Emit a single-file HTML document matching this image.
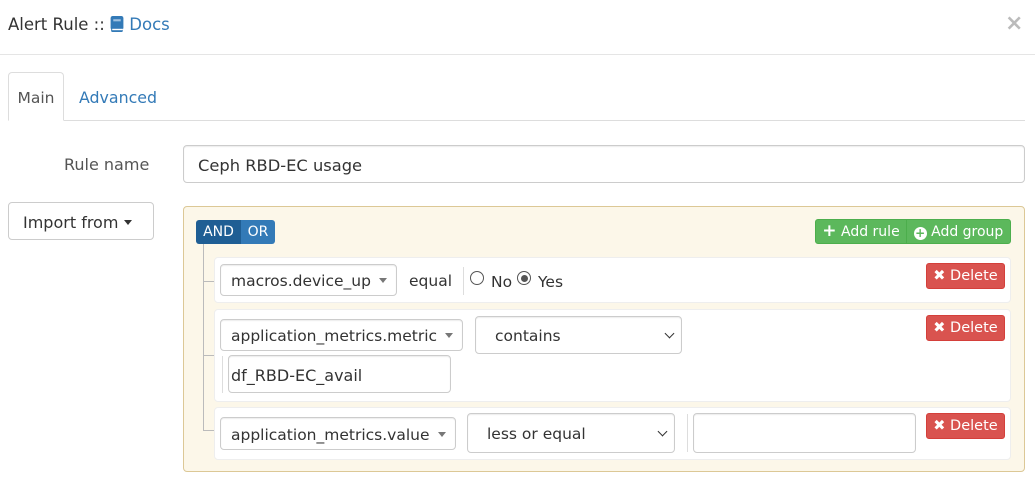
<!DOCTYPE html>
<html><head><style>
*{box-sizing:border-box;margin:0;padding:0}
body{width:1035px;height:489px;background:#fff;font-family:"DejaVu Sans","Liberation Sans",sans-serif;font-size:15.5px;color:#333;position:relative;overflow:hidden}
.a{position:absolute}
.sel{position:absolute;background:#fff;border:1px solid #ccc;border-radius:4px;box-shadow:inset 0 1px 1px rgba(0,0,0,.075);display:flex;align-items:center;padding-left:10px;font-size:15.5px;color:#333;padding-top:2px}
.caret{position:absolute;right:9px;top:50%;margin-top:-2px;border-left:4px solid transparent;border-right:4px solid transparent;border-top:5px solid #777}
.chev{position:absolute;right:8px;top:50%;margin-top:-5px;width:7px;height:7px;border-right:1.6px solid #333;border-bottom:1.6px solid #333;transform:rotate(45deg)}
.rule{position:absolute;left:214px;width:797px;background:#fff;border:1px solid #eee;border-radius:4px}
.del{position:absolute;left:926px;width:79px;height:26px;background:#d9534f;border:1px solid #d43f3a;border-radius:3px;color:#fff;font-size:14.5px;display:flex;align-items:center;justify-content:center}
.inp{position:absolute;background:#fff;border:1px solid #ccc;border-radius:4px;box-shadow:inset 0 1px 1px rgba(0,0,0,.075)}
</style></head><body>
<div class="a" style="left:8px;top:15px;font-size:16.5px">Alert Rule :: <span style="color:#337ab7"><svg width="14" height="16" viewBox="0 0 13 15" style="vertical-align:-2px"><rect x="0.5" y="0" width="12" height="13" rx="2" fill="#337ab7"/><rect x="3" y="3" width="7" height="2" fill="#9fc1e0"/><rect x="1" y="12" width="11" height="3" rx="1" fill="#337ab7"/><rect x="2" y="12" width="10" height="1.3" fill="#fff"/></svg> Docs</span></div>
<div class="a" style="left:1005px;top:11px;font-size:22px;color:#bbb;font-weight:bold">×</div>
<div class="a" style="left:0;top:54px;width:1035px;height:1px;background:#e5e5e5"></div>
<div class="a" style="left:8px;top:120px;width:1017px;height:1px;background:#ddd"></div>
<div class="a" style="left:8px;top:72px;width:56px;height:49px;border:1px solid #ddd;border-bottom-color:#fff;border-radius:4px 4px 0 0;background:#fff;display:flex;align-items:center;justify-content:center;color:#555;padding-top:2px">Main</div>
<div class="a" style="left:79px;top:88px;color:#337ab7;font-size:15.8px">Advanced</div>
<div class="a" style="left:64px;top:155px;color:#555;font-size:16px">Rule name</div>
<div class="inp" style="left:183px;top:145px;width:842px;height:38px;padding:2px 14px 0;display:flex;align-items:center;color:#333;font-size:16.3px">Ceph RBD-EC usage</div>
<div class="a" style="left:8px;top:202px;width:146px;height:38px;border:1px solid #ccc;border-radius:4px;display:flex;align-items:center;padding-left:14px;padding-top:2px;font-size:16px">Import from <span style="display:inline-block;margin-left:6px;border-left:4px solid transparent;border-right:4px solid transparent;border-top:5px solid #333"></span></div>
<div class="a" style="left:183px;top:206px;width:842px;height:266px;background:#fcf7e9;border:1px solid #dcc896;border-radius:4px"></div>
<div class="a" style="left:196px;top:220px;width:45px;height:24px;background:#1f5e94;border-radius:3px 0 0 3px;color:#fff;font-size:14px;display:flex;align-items:center;justify-content:center">AND</div>
<div class="a" style="left:241px;top:220px;width:34px;height:24px;background:#337ab7;border-radius:0 3px 3px 0;color:#fff;font-size:14px;display:flex;align-items:center;justify-content:center">OR</div>
<div class="a" style="left:815px;top:219px;width:196px;height:25px;background:#5cb85c;border:1px solid #4cae4c;border-radius:3px;color:#fff;font-size:14px;display:flex;align-items:center">
<span style="width:91px;text-align:center;border-right:1px solid #4cae4c;line-height:23px"><b style="font-size:17px">+</b> Add rule</span><span style="flex:1;text-align:center"><span style="display:inline-block;width:13px;height:13px;border-radius:50%;background:#fff;color:#5cb85c;font-size:12px;line-height:13px;font-weight:bold;vertical-align:-1px">+</span> Add group</span></div>
<div class="a" style="left:203px;top:244px;width:1px;height:187px;background:#bbb"></div>
<div class="a" style="left:203px;top:281px;width:11px;height:1px;background:#bbb"></div>
<div class="a" style="left:203px;top:355px;width:11px;height:1px;background:#bbb"></div>
<div class="a" style="left:203px;top:430px;width:11px;height:1px;background:#bbb"></div>
<div class="rule" style="top:257px;height:46px"></div>
<div class="rule" style="top:309px;height:93px"></div>
<div class="rule" style="top:407px;height:53px"></div>
<div class="sel" style="left:220px;top:264px;width:177px;height:32px">macros.device_up<span class="caret"></span></div>
<div class="a" style="left:409px;top:272px">equal</div>
<div class="a" style="left:463px;top:267px;width:1px;height:28px;background:#ddd"></div>
<div class="a" style="left:470px;top:271px;width:14px;height:14px;border:1px solid #555;border-radius:50%"></div>
<div class="a" style="left:491px;top:273px">No</div>
<div class="a" style="left:517px;top:271px;width:14px;height:14px;border:1px solid #555;border-radius:50%"><div style="margin:2.5px;width:7px;height:7px;border-radius:50%;background:#555"></div></div>
<div class="a" style="left:538px;top:273px">Yes</div>
<div class="del" style="top:263px">✖ Delete</div>
<div class="sel" style="left:220px;top:319px;width:243px;height:32px">application_metrics.metric<span class="caret"></span></div>
<div class="sel" style="left:475px;top:316px;width:207px;height:38px;padding-left:19px">contains<span class="chev"></span></div>
<div class="a" style="left:222px;top:356px;width:1px;height:37px;background:#ddd"></div>
<div class="inp" style="left:228px;top:355px;width:223px;height:38px;padding-left:2px;padding-top:2px;display:flex;align-items:center;font-size:16px">df_RBD-EC_avail</div>
<div class="del" style="top:315px">✖ Delete</div>
<div class="sel" style="left:220px;top:417px;width:236px;height:33px">application_metrics.value<span class="caret"></span></div>
<div class="sel" style="left:467px;top:413px;width:208px;height:40px;padding-left:19px">less or equal<span class="chev"></span></div>
<div class="a" style="left:687px;top:414px;width:1px;height:38px;background:#ddd"></div>
<div class="inp" style="left:693px;top:413px;width:223px;height:40px"></div>
<div class="del" style="top:413px">✖ Delete</div>
</body></html>
